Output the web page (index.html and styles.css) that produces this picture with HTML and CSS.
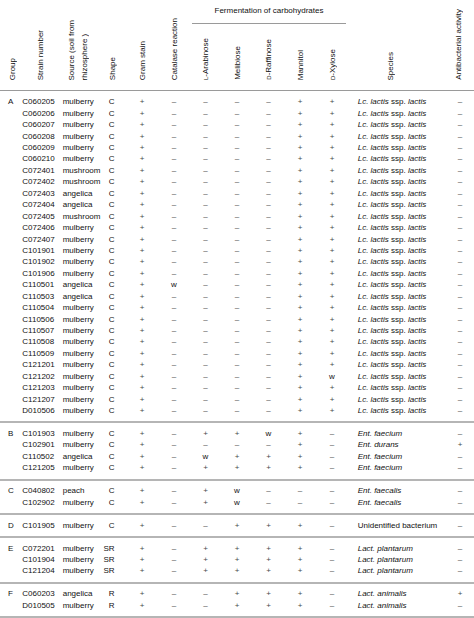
FILE: index.html
```html
<!DOCTYPE html>
<html lang="en">
<head>
<meta charset="utf-8">
<title>Strain characteristics</title>
<link rel="stylesheet" href="styles.css">
</head>
<body>
<div class="tbl">
  <div class="cols head">
    <div class="hl hg"><span class="rot">Group</span></div>
    <div class="hl"><span class="rot">Strain number</span></div>
    <div class="hl hsrc"><span class="rot rot2">Source (soil from<br>rhizosphere )</span></div>
    <div class="hl hsh"><span class="rot">Shape</span></div>
    <div class="hl"><span class="rot">Gram stain</span></div>
    <div class="hl"><span class="rot">Catalase reaction</span></div>
    <div class="ferm">Fermentation of carbohydrates</div>
    <div class="hs c7"><span class="rot"><span class="sc">l</span>-Arabinose</span></div>
    <div class="hs c8"><span class="rot">Melibiose</span></div>
    <div class="hs c9"><span class="rot"><span class="sc">d</span>-Raffinose</span></div>
    <div class="hs c10"><span class="rot">Mannitol</span></div>
    <div class="hs c11"><span class="rot"><span class="sc">d</span>-Xylose</span></div>
    <div class="hl hsp"><span class="rot">Species</span></div>
    <div class="hl hab"><span class="rot">Antibacterial activity</span></div>
  </div>

  <div class="grp first">
    <div class="cols row"><span class="g">A</span><span class="sn">C060205</span><span class="src">mulberry</span><span class="sh">C</span><span class="v">+</span><span class="v">–</span><span class="v">–</span><span class="v">–</span><span class="v">–</span><span class="v">+</span><span class="v">+</span><span class="sp"><i>Lc. lactis</i> ssp. <i>lactis</i></span><span class="v">–</span></div>
    <div class="cols row"><span class="g"></span><span class="sn">C060206</span><span class="src">mulberry</span><span class="sh">C</span><span class="v">+</span><span class="v">–</span><span class="v">–</span><span class="v">–</span><span class="v">–</span><span class="v">+</span><span class="v">+</span><span class="sp"><i>Lc. lactis</i> ssp. <i>lactis</i></span><span class="v">–</span></div>
    <div class="cols row"><span class="g"></span><span class="sn">C060207</span><span class="src">mulberry</span><span class="sh">C</span><span class="v">+</span><span class="v">–</span><span class="v">–</span><span class="v">–</span><span class="v">–</span><span class="v">+</span><span class="v">+</span><span class="sp"><i>Lc. lactis</i> ssp. <i>lactis</i></span><span class="v">–</span></div>
    <div class="cols row"><span class="g"></span><span class="sn">C060208</span><span class="src">mulberry</span><span class="sh">C</span><span class="v">+</span><span class="v">–</span><span class="v">–</span><span class="v">–</span><span class="v">–</span><span class="v">+</span><span class="v">+</span><span class="sp"><i>Lc. lactis</i> ssp. <i>lactis</i></span><span class="v">–</span></div>
    <div class="cols row"><span class="g"></span><span class="sn">C060209</span><span class="src">mulberry</span><span class="sh">C</span><span class="v">+</span><span class="v">–</span><span class="v">–</span><span class="v">–</span><span class="v">–</span><span class="v">+</span><span class="v">+</span><span class="sp"><i>Lc. lactis</i> ssp. <i>lactis</i></span><span class="v">–</span></div>
    <div class="cols row"><span class="g"></span><span class="sn">C060210</span><span class="src">mulberry</span><span class="sh">C</span><span class="v">+</span><span class="v">–</span><span class="v">–</span><span class="v">–</span><span class="v">–</span><span class="v">+</span><span class="v">+</span><span class="sp"><i>Lc. lactis</i> ssp. <i>lactis</i></span><span class="v">–</span></div>
    <div class="cols row"><span class="g"></span><span class="sn">C072401</span><span class="src">mushroom</span><span class="sh">C</span><span class="v">+</span><span class="v">–</span><span class="v">–</span><span class="v">–</span><span class="v">–</span><span class="v">+</span><span class="v">+</span><span class="sp"><i>Lc. lactis</i> ssp. <i>lactis</i></span><span class="v">–</span></div>
    <div class="cols row"><span class="g"></span><span class="sn">C072402</span><span class="src">mushroom</span><span class="sh">C</span><span class="v">+</span><span class="v">–</span><span class="v">–</span><span class="v">–</span><span class="v">–</span><span class="v">+</span><span class="v">+</span><span class="sp"><i>Lc. lactis</i> ssp. <i>lactis</i></span><span class="v">–</span></div>
    <div class="cols row"><span class="g"></span><span class="sn">C072403</span><span class="src">angelica</span><span class="sh">C</span><span class="v">+</span><span class="v">–</span><span class="v">–</span><span class="v">–</span><span class="v">–</span><span class="v">+</span><span class="v">+</span><span class="sp"><i>Lc. lactis</i> ssp. <i>lactis</i></span><span class="v">–</span></div>
    <div class="cols row"><span class="g"></span><span class="sn">C072404</span><span class="src">angelica</span><span class="sh">C</span><span class="v">+</span><span class="v">–</span><span class="v">–</span><span class="v">–</span><span class="v">–</span><span class="v">+</span><span class="v">+</span><span class="sp"><i>Lc. lactis</i> ssp. <i>lactis</i></span><span class="v">–</span></div>
    <div class="cols row"><span class="g"></span><span class="sn">C072405</span><span class="src">mushroom</span><span class="sh">C</span><span class="v">+</span><span class="v">–</span><span class="v">–</span><span class="v">–</span><span class="v">–</span><span class="v">+</span><span class="v">+</span><span class="sp"><i>Lc. lactis</i> ssp. <i>lactis</i></span><span class="v">–</span></div>
    <div class="cols row"><span class="g"></span><span class="sn">C072406</span><span class="src">mulberry</span><span class="sh">C</span><span class="v">+</span><span class="v">–</span><span class="v">–</span><span class="v">–</span><span class="v">–</span><span class="v">+</span><span class="v">+</span><span class="sp"><i>Lc. lactis</i> ssp. <i>lactis</i></span><span class="v">–</span></div>
    <div class="cols row"><span class="g"></span><span class="sn">C072407</span><span class="src">mulberry</span><span class="sh">C</span><span class="v">+</span><span class="v">–</span><span class="v">–</span><span class="v">–</span><span class="v">–</span><span class="v">+</span><span class="v">+</span><span class="sp"><i>Lc. lactis</i> ssp. <i>lactis</i></span><span class="v">–</span></div>
    <div class="cols row"><span class="g"></span><span class="sn">C101901</span><span class="src">mulberry</span><span class="sh">C</span><span class="v">+</span><span class="v">–</span><span class="v">–</span><span class="v">–</span><span class="v">–</span><span class="v">+</span><span class="v">+</span><span class="sp"><i>Lc. lactis</i> ssp. <i>lactis</i></span><span class="v">–</span></div>
    <div class="cols row"><span class="g"></span><span class="sn">C101902</span><span class="src">mulberry</span><span class="sh">C</span><span class="v">+</span><span class="v">–</span><span class="v">–</span><span class="v">–</span><span class="v">–</span><span class="v">+</span><span class="v">+</span><span class="sp"><i>Lc. lactis</i> ssp. <i>lactis</i></span><span class="v">–</span></div>
    <div class="cols row"><span class="g"></span><span class="sn">C101906</span><span class="src">mulberry</span><span class="sh">C</span><span class="v">+</span><span class="v">–</span><span class="v">–</span><span class="v">–</span><span class="v">–</span><span class="v">+</span><span class="v">+</span><span class="sp"><i>Lc. lactis</i> ssp. <i>lactis</i></span><span class="v">–</span></div>
    <div class="cols row"><span class="g"></span><span class="sn">C110501</span><span class="src">angelica</span><span class="sh">C</span><span class="v">+</span><span class="v w">w</span><span class="v">–</span><span class="v">–</span><span class="v">–</span><span class="v">+</span><span class="v">+</span><span class="sp"><i>Lc. lactis</i> ssp. <i>lactis</i></span><span class="v">–</span></div>
    <div class="cols row"><span class="g"></span><span class="sn">C110503</span><span class="src">angelica</span><span class="sh">C</span><span class="v">+</span><span class="v">–</span><span class="v">–</span><span class="v">–</span><span class="v">–</span><span class="v">+</span><span class="v">+</span><span class="sp"><i>Lc. lactis</i> ssp. <i>lactis</i></span><span class="v">–</span></div>
    <div class="cols row"><span class="g"></span><span class="sn">C110504</span><span class="src">mulberry</span><span class="sh">C</span><span class="v">+</span><span class="v">–</span><span class="v">–</span><span class="v">–</span><span class="v">–</span><span class="v">+</span><span class="v">+</span><span class="sp"><i>Lc. lactis</i> ssp. <i>lactis</i></span><span class="v">–</span></div>
    <div class="cols row"><span class="g"></span><span class="sn">C110506</span><span class="src">mulberry</span><span class="sh">C</span><span class="v">+</span><span class="v">–</span><span class="v">–</span><span class="v">–</span><span class="v">–</span><span class="v">+</span><span class="v">+</span><span class="sp"><i>Lc. lactis</i> ssp. <i>lactis</i></span><span class="v">–</span></div>
    <div class="cols row"><span class="g"></span><span class="sn">C110507</span><span class="src">mulberry</span><span class="sh">C</span><span class="v">+</span><span class="v">–</span><span class="v">–</span><span class="v">–</span><span class="v">–</span><span class="v">+</span><span class="v">+</span><span class="sp"><i>Lc. lactis</i> ssp. <i>lactis</i></span><span class="v">–</span></div>
    <div class="cols row"><span class="g"></span><span class="sn">C110508</span><span class="src">mulberry</span><span class="sh">C</span><span class="v">+</span><span class="v">–</span><span class="v">–</span><span class="v">–</span><span class="v">–</span><span class="v">+</span><span class="v">+</span><span class="sp"><i>Lc. lactis</i> ssp. <i>lactis</i></span><span class="v">–</span></div>
    <div class="cols row"><span class="g"></span><span class="sn">C110509</span><span class="src">mulberry</span><span class="sh">C</span><span class="v">+</span><span class="v">–</span><span class="v">–</span><span class="v">–</span><span class="v">–</span><span class="v">+</span><span class="v">+</span><span class="sp"><i>Lc. lactis</i> ssp. <i>lactis</i></span><span class="v">–</span></div>
    <div class="cols row"><span class="g"></span><span class="sn">C121201</span><span class="src">mulberry</span><span class="sh">C</span><span class="v">+</span><span class="v">–</span><span class="v">–</span><span class="v">–</span><span class="v">–</span><span class="v">+</span><span class="v">+</span><span class="sp"><i>Lc. lactis</i> ssp. <i>lactis</i></span><span class="v">–</span></div>
    <div class="cols row"><span class="g"></span><span class="sn">C121202</span><span class="src">mulberry</span><span class="sh">C</span><span class="v">+</span><span class="v">–</span><span class="v">–</span><span class="v">–</span><span class="v">–</span><span class="v">+</span><span class="v w">w</span><span class="sp"><i>Lc. lactis</i> ssp. <i>lactis</i></span><span class="v">–</span></div>
    <div class="cols row"><span class="g"></span><span class="sn">C121203</span><span class="src">mulberry</span><span class="sh">C</span><span class="v">+</span><span class="v">–</span><span class="v">–</span><span class="v">–</span><span class="v">–</span><span class="v">+</span><span class="v">+</span><span class="sp"><i>Lc. lactis</i> ssp. <i>lactis</i></span><span class="v">–</span></div>
    <div class="cols row"><span class="g"></span><span class="sn">C121207</span><span class="src">mulberry</span><span class="sh">C</span><span class="v">+</span><span class="v">–</span><span class="v">–</span><span class="v">–</span><span class="v">–</span><span class="v">+</span><span class="v">+</span><span class="sp"><i>Lc. lactis</i> ssp. <i>lactis</i></span><span class="v">–</span></div>
    <div class="cols row"><span class="g"></span><span class="sn">D010506</span><span class="src">mulberry</span><span class="sh">C</span><span class="v">+</span><span class="v">–</span><span class="v">–</span><span class="v">–</span><span class="v">–</span><span class="v">+</span><span class="v">+</span><span class="sp"><i>Lc. lactis</i> ssp. <i>lactis</i></span><span class="v">–</span></div>
  </div>

  <div class="grp">
    <div class="cols row"><span class="g">B</span><span class="sn">C101903</span><span class="src">mulberry</span><span class="sh">C</span><span class="v">+</span><span class="v">–</span><span class="v">+</span><span class="v">+</span><span class="v w">w</span><span class="v">+</span><span class="v">–</span><span class="sp"><i>Ent. faecium</i></span><span class="v">–</span></div>
    <div class="cols row"><span class="g"></span><span class="sn">C102901</span><span class="src">mulberry</span><span class="sh">C</span><span class="v">+</span><span class="v">–</span><span class="v">–</span><span class="v">–</span><span class="v">–</span><span class="v">+</span><span class="v">–</span><span class="sp"><i>Ent. durans</i></span><span class="v">+</span></div>
    <div class="cols row"><span class="g"></span><span class="sn">C110502</span><span class="src">angelica</span><span class="sh">C</span><span class="v">+</span><span class="v">–</span><span class="v w">w</span><span class="v">+</span><span class="v">+</span><span class="v">+</span><span class="v">–</span><span class="sp"><i>Ent. faecium</i></span><span class="v">–</span></div>
    <div class="cols row"><span class="g"></span><span class="sn">C121205</span><span class="src">mulberry</span><span class="sh">C</span><span class="v">+</span><span class="v">–</span><span class="v">+</span><span class="v">+</span><span class="v">+</span><span class="v">+</span><span class="v">–</span><span class="sp"><i>Ent. faecium</i></span><span class="v">–</span></div>
  </div>

  <div class="grp">
    <div class="cols row"><span class="g">C</span><span class="sn">C040802</span><span class="src">peach</span><span class="sh">C</span><span class="v">+</span><span class="v">–</span><span class="v">+</span><span class="v w">w</span><span class="v">–</span><span class="v">–</span><span class="v">–</span><span class="sp"><i>Ent. faecalis</i></span><span class="v">–</span></div>
    <div class="cols row"><span class="g"></span><span class="sn">C102902</span><span class="src">mulberry</span><span class="sh">C</span><span class="v">+</span><span class="v">–</span><span class="v">+</span><span class="v w">w</span><span class="v">–</span><span class="v">–</span><span class="v">–</span><span class="sp"><i>Ent. faecalis</i></span><span class="v">–</span></div>
  </div>

  <div class="grp">
    <div class="cols row"><span class="g">D</span><span class="sn">C101905</span><span class="src">mulberry</span><span class="sh">C</span><span class="v">+</span><span class="v">–</span><span class="v">–</span><span class="v">+</span><span class="v">+</span><span class="v">+</span><span class="v">–</span><span class="sp">Unidentified bacterium</span><span class="v">–</span></div>
  </div>

  <div class="grp">
    <div class="cols row"><span class="g">E</span><span class="sn">C072201</span><span class="src">mulberry</span><span class="sh">SR</span><span class="v">+</span><span class="v">–</span><span class="v">+</span><span class="v">+</span><span class="v">+</span><span class="v">+</span><span class="v">–</span><span class="sp"><i>Lact. plantarum</i></span><span class="v">–</span></div>
    <div class="cols row"><span class="g"></span><span class="sn">C101904</span><span class="src">mulberry</span><span class="sh">SR</span><span class="v">+</span><span class="v">–</span><span class="v">+</span><span class="v">+</span><span class="v">+</span><span class="v">+</span><span class="v">–</span><span class="sp"><i>Lact. plantarum</i></span><span class="v">–</span></div>
    <div class="cols row"><span class="g"></span><span class="sn">C121204</span><span class="src">mulberry</span><span class="sh">SR</span><span class="v">+</span><span class="v">–</span><span class="v">+</span><span class="v">+</span><span class="v">+</span><span class="v">+</span><span class="v">–</span><span class="sp"><i>Lact. plantarum</i></span><span class="v">–</span></div>
  </div>

  <div class="grp">
    <div class="cols row"><span class="g">F</span><span class="sn">C060203</span><span class="src">angelica</span><span class="sh">R</span><span class="v">+</span><span class="v">–</span><span class="v">–</span><span class="v">+</span><span class="v">+</span><span class="v">+</span><span class="v">–</span><span class="sp"><i>Lact. animalis</i></span><span class="v">+</span></div>
    <div class="cols row"><span class="g"></span><span class="sn">D010505</span><span class="src">mulberry</span><span class="sh">R</span><span class="v">+</span><span class="v">–</span><span class="v">–</span><span class="v">+</span><span class="v">+</span><span class="v">+</span><span class="v">–</span><span class="sp"><i>Lact. animalis</i></span><span class="v">–</span></div>
  </div>
</div>
</body>
</html>
```

FILE: styles.css
```css
html, body {
  margin: 0;
  padding: 0;
  background: #ffffff;
}
body {
  font-family: "Liberation Sans", Arial, sans-serif;
  font-size: 8px;
  color: #111111;
}
.tbl {
  width: 474px;
}
.cols {
  display: grid;
  grid-template-columns: 20px 40px 41px 25px 32px 32px 31px 32px 31px 32px 32px 98px 28px;
}
.head {
  height: 90px;
  border-bottom: 1px solid #9a9a9a;
  grid-template-rows: 23.5px 66.5px;
}
.hl, .hs {
  display: flex;
  justify-content: center;
  align-items: flex-end;
  padding-bottom: 10px;
}
.hl { grid-row: 1 / 3; }
.hs { grid-row: 2; }
.c7 { grid-column: 7; }
.c8 { grid-column: 8; }
.c9 { grid-column: 9; }
.c10 { grid-column: 10; }
.c11 { grid-column: 11; }
.hl.hsp { grid-column: 12; }
.hl.hab { grid-column: 13; }
.hg { padding-left: 4px; }
.hsrc { padding-right: 5px; }
.hsh { padding-right: 2px; }
.hsp { padding-right: 14px; }
.hab { padding-right: 4px; }
.rot {
  writing-mode: vertical-rl;
  transform: rotate(180deg);
  white-space: nowrap;
  line-height: 9px;
}
.rot2 {
  line-height: 12.5px;
}
.sc {
  font-variant: small-caps;
}
.ferm {
  grid-column: 7 / 12;
  grid-row: 1;
  text-align: center;
  padding-top: 6px;
  line-height: 10px;
  margin: 0 2px;
  border-bottom: 1px solid #9a9a9a;
  box-sizing: border-box;
  white-space: nowrap;
}
.grp {
  padding: 4.75px 0;
  border-bottom: 2px solid #b5b5b5;
}
.grp.first {
  padding-top: 5.3px;
}
.row {
  height: 11.44px;
  line-height: 11.44px;
  white-space: nowrap;
}
.g { padding-left: 8px; }
.sn { padding-left: 2.3px; }
.src { padding-left: 2.7px; }
.sh { text-align: right; padding-right: 11.5px; }
.v { text-align: center; color: #4a4a4a; }
.v.w { color: #111111; }
.sp { padding-left: 9.7px; }
```
